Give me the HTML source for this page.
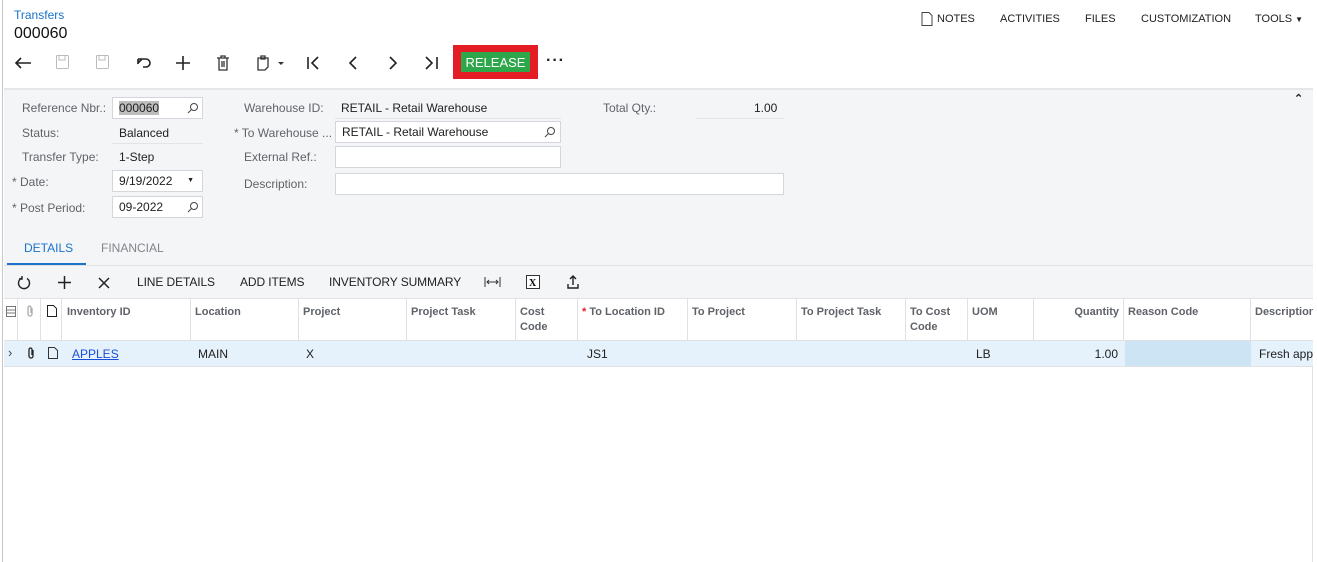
<!DOCTYPE html><html><head><style>
*{box-sizing:border-box;margin:0;padding:0}
body{width:1317px;height:562px;overflow:hidden;background:#fff;font-family:"Liberation Sans",sans-serif;font-size:12px;color:#212121;position:relative}
.a{position:absolute;white-space:nowrap}
.lbl{color:#5f6368;font-size:12px}
.inp{position:absolute;background:#fff;border:1px solid #d3d6da;height:22px;padding:3px 6px;font-size:12px}
.ico{position:absolute}
.th{position:absolute;top:299px;height:42px;border-right:1px solid #dfe1e4;padding:6px 4px;font-weight:bold;color:#5f6368;font-size:11px;line-height:15px;white-space:nowrap}
.td{position:absolute;top:341px;height:25px;padding:6px 6px;font-size:12px;white-space:nowrap}
.tb{position:absolute;top:13px;font-size:11px;color:#212121}
</style></head><body>
<div class="a" style="left:2px;top:0;width:1px;height:562px;background:#c8c8c8"></div>
<div class="a" style="left:1312px;top:89px;width:1px;height:473px;background:#dfe1e4"></div>
<div class="a" style="left:14px;top:8px;color:#1a73c9;font-size:12px">Transfers</div>
<div class="a" style="left:14px;top:25px;font-size:16px;color:#111">000060</div>
<svg class="ico" style="left:921px;top:12px" width="12" height="14"><path d="M1 .5h7l3 3v10H1z" fill="none" stroke="#444"/></svg>
<div class="tb" style="left:937px">NOTES</div>
<div class="tb" style="left:1000px">ACTIVITIES</div>
<div class="tb" style="left:1085px">FILES</div>
<div class="tb" style="left:1141px">CUSTOMIZATION</div>
<div class="tb" style="left:1255px">TOOLS <span style="font-size:8px">▼</span></div>
<svg class="ico" style="left:14px;top:54px" width="20" height="18" stroke="#222" fill="none" stroke-width="1.6"><path d="M3 9h14M7 4L2 9l5 5"/></svg>
<svg class="ico" style="left:55px;top:54px" width="16" height="17" stroke="#bbb" fill="none"><rect x="1.5" y="1.5" width="12" height="13" rx="1"/><path d="M4 2v4h6V2"/></svg>
<svg class="ico" style="left:95px;top:54px" width="16" height="17" stroke="#bbb" fill="none"><rect x="1.5" y="1.5" width="12" height="13" rx="1"/><path d="M4 2v4h6V2"/></svg>
<svg class="ico" style="left:135px;top:54px" width="18" height="17" stroke="#222" fill="none" stroke-width="1.6"><path d="M3 5h8a4 4 0 0 1 0 8H8M3 5v5M3 9l4-4" /></svg>
<svg class="ico" style="left:174px;top:54px" width="18" height="18" stroke="#222" stroke-width="1.6"><path d="M9 2v14M2 9h14"/></svg>
<svg class="ico" style="left:216px;top:54px" width="14" height="18" stroke="#333" fill="none" stroke-width="1.3"><path d="M1 4h12M5 4V2h4v2M3 4v12h8V4M6 7v6M8 7v6"/></svg>
<svg class="ico" style="left:255px;top:54px" width="30" height="18" stroke="#333" fill="none" stroke-width="1.3"><path d="M3 4h10v9l-3 3H3z M6 2h4v3H6z"/><path d="M23 8h6l-3 3z" fill="#333" stroke="none"/></svg>
<svg class="ico" style="left:306px;top:55px" width="14" height="16" stroke="#222" fill="none" stroke-width="1.6"><path d="M2 2v12M12 2l-6 6 6 6"/></svg>
<svg class="ico" style="left:346px;top:55px" width="14" height="16" stroke="#222" fill="none" stroke-width="1.6"><path d="M10 2l-6 6 6 6"/></svg>
<svg class="ico" style="left:386px;top:55px" width="14" height="16" stroke="#222" fill="none" stroke-width="1.6"><path d="M4 2l6 6-6 6"/></svg>
<svg class="ico" style="left:424px;top:55px" width="16" height="16" stroke="#222" fill="none" stroke-width="1.6"><path d="M2 2l6 6-6 6M13 2v12"/></svg>
<div class="a" style="left:453px;top:45px;width:85px;height:34px;background:#e41c23"></div>
<div class="a" style="left:461px;top:52px;width:69px;height:20px;background:#2ea64a;color:#fff;font-size:13px;text-align:center;line-height:21px">RELEASE</div>
<div class="a" style="left:546px;top:52px;font-size:16px;font-weight:bold;letter-spacing:1px">···</div>
<div class="a" style="left:4px;top:88px;width:1309px;height:211px;background:#f4f5f7;border-top:2px solid #e6e7e9"></div>
<div class="a" style="left:1294px;top:92px;font-size:11px;font-weight:bold">⌃</div>
<div class="a lbl" style="left:22px;top:101px">Reference Nbr.:</div>
<div class="inp" style="left:112px;top:97px;width:91px"><span style="background:#bdbdbd">000060</span></div>
<div class="a lbl" style="left:22px;top:126px">Status:</div>
<div class="a" style="left:119px;top:126px">Balanced</div>
<div class="a lbl" style="left:22px;top:150px">Transfer Type:</div>
<div class="a" style="left:119px;top:150px">1-Step</div>
<div class="a lbl" style="left:12px;top:175px">* Date:</div>
<div class="inp" style="left:112px;top:170px;width:91px">9/19/2022<span style="position:absolute;right:8px;font-size:7px;top:6px">▼</span></div>
<div class="a lbl" style="left:12px;top:201px">* Post Period:</div>
<div class="inp" style="left:112px;top:196px;width:91px">09-2022</div>
<div class="a lbl" style="left:244px;top:101px">Warehouse ID:</div>
<div class="a" style="left:341px;top:101px">RETAIL - Retail Warehouse</div>
<div class="a lbl" style="left:234px;top:126px">* To Warehouse ...</div>
<div class="inp" style="left:335px;top:121px;width:226px">RETAIL - Retail Warehouse</div>
<div class="a lbl" style="left:244px;top:150px">External Ref.:</div>
<div class="inp" style="left:335px;top:146px;width:226px"></div>
<div class="a lbl" style="left:244px;top:177px">Description:</div>
<div class="inp" style="left:335px;top:173px;width:449px"></div>
<div class="a lbl" style="left:603px;top:101px">Total Qty.:</div>
<div class="a" style="left:754px;top:101px">1.00</div>
<div class="a" style="left:696px;top:118px;width:88px;height:1px;background:#e3e4e6"></div>
<div class="a" style="left:112px;top:143px;width:91px;height:1px;background:#e3e4e6"></div>
<div class="a" style="left:335px;top:118px;width:226px;height:1px;background:#e3e4e6"></div>
<svg class="ico" style="left:187px;top:102px" width="12" height="12" stroke="#444" fill="none"><circle cx="7" cy="5" r="3.5"/><path d="M4.5 7.5L1 11"/></svg>
<svg class="ico" style="left:187px;top:201px" width="12" height="12" stroke="#444" fill="none"><circle cx="7" cy="5" r="3.5"/><path d="M4.5 7.5L1 11"/></svg>
<svg class="ico" style="left:544px;top:126px" width="12" height="12" stroke="#444" fill="none"><circle cx="7" cy="5" r="3.5"/><path d="M4.5 7.5L1 11"/></svg>
<div class="a" style="left:24px;top:241px;color:#1a73c9;font-size:12px">DETAILS</div>
<div class="a" style="left:101px;top:241px;color:#80868b;font-size:12px">FINANCIAL</div>
<div class="a" style="left:7px;top:263px;width:79px;height:2px;background:#1a73c9"></div>
<div class="a" style="left:4px;top:265px;width:1309px;height:1px;background:#dfe1e4"></div>
<svg class="ico" style="left:17px;top:275px" width="14" height="15" stroke="#222" fill="none" stroke-width="1.4"><path d="M5 3A5.5 5.5 0 1 0 10 3.5M5 1v3H2"/></svg>
<svg class="ico" style="left:57px;top:275px" width="15" height="15" stroke="#222" stroke-width="1.5"><path d="M7.5 1v13M1 7.5h13"/></svg>
<svg class="ico" style="left:98px;top:277px" width="12" height="12" stroke="#222" stroke-width="1.5"><path d="M1 1l10 10M11 1L1 11"/></svg>
<div class="a" style="left:137px;top:275px;font-size:12px;letter-spacing:-.1px">LINE DETAILS</div>
<div class="a" style="left:240px;top:275px;font-size:12px;letter-spacing:-.1px">ADD ITEMS</div>
<div class="a" style="left:329px;top:275px;font-size:12px;letter-spacing:-.1px">INVENTORY SUMMARY</div>
<svg class="ico" style="left:484px;top:275px" width="17" height="14" stroke="#333" fill="none"><path d="M1 2v10M16 2v10M3 7h11M5 5l-2 2 2 2M12 5l2 2-2 2"/></svg>
<svg class="ico" style="left:526px;top:275px" width="14" height="14"><rect x=".5" y=".5" width="13" height="13" fill="#fff" stroke="#333"/><text x="3" y="11" font-size="10" font-weight="bold" font-family="Liberation Serif">X</text></svg>
<svg class="ico" style="left:566px;top:274px" width="14" height="16" stroke="#222" fill="none" stroke-width="1.4"><path d="M7 2v9M4 5l3-3 3 3M2 10v4h10v-4"/></svg>
<div class="a" style="left:4px;top:298px;width:1309px;height:1px;background:#dfe1e4"></div>
<div class="a" style="left:4px;top:299px;width:1309px;height:42px;background:#fff"></div>
<div class="th" style="left:4px;width:14px"></div>
<div class="th" style="left:18px;width:23px"></div>
<div class="th" style="left:41px;width:21px"></div>
<div class="th" style="left:62px;width:129px;padding-left:5px">Inventory ID</div>
<div class="th" style="left:191px;width:108px">Location</div>
<div class="th" style="left:299px;width:108px">Project</div>
<div class="th" style="left:407px;width:109px">Project Task</div>
<div class="th" style="left:516px;width:62px">Cost<br>Code</div>
<div class="th" style="left:578px;width:110px"><span style="color:#e41c23">*</span> To Location ID</div>
<div class="th" style="left:688px;width:109px">To Project</div>
<div class="th" style="left:797px;width:109px">To Project Task</div>
<div class="th" style="left:906px;width:62px">To Cost<br>Code</div>
<div class="th" style="left:968px;width:66px">UOM</div>
<div class="th" style="left:1034px;width:90px;text-align:right">Quantity</div>
<div class="th" style="left:1124px;width:127px">Reason Code</div>
<div class="th" style="left:1251px;width:62px;border:none;overflow:hidden">Description</div>
<svg class="ico" style="left:6px;top:306px" width="10" height="11" stroke="#777" fill="none"><rect x=".5" y=".5" width="9" height="10"/><path d="M1 4h8M1 7h8"/></svg>
<svg class="ico" style="left:26px;top:305px" width="9" height="12" stroke="#aaa" fill="none" stroke-width="1.3"><path d="M6 3v6a2 2 0 0 1-4 0V2.5a1.5 1.5 0 0 1 3 0V8"/></svg>
<svg class="ico" style="left:47px;top:305px" width="10" height="12" stroke="#222" fill="none"><path d="M.5.5h6l3 3v8H.5z"/></svg>
<div class="a" style="left:4px;top:340px;width:1309px;height:1px;background:#dfe1e4"></div>
<div class="a" style="left:4px;top:341px;width:1309px;height:25px;background:#e5f1fb"></div>
<div class="a" style="left:1125px;top:341px;width:126px;height:25px;background:#cde4f4"></div>
<div class="a" style="left:4px;top:366px;width:1309px;height:1px;background:#dfe1e4"></div>
<div class="a" style="left:8px;top:345px;font-size:13px;color:#444">›</div>
<svg class="ico" style="left:27px;top:347px" width="9" height="12" stroke="#222" fill="none" stroke-width="1.3"><path d="M6 3v6a2 2 0 0 1-4 0V2.5a1.5 1.5 0 0 1 3 0V8"/></svg>
<svg class="ico" style="left:48px;top:347px" width="10" height="12" stroke="#333" fill="none"><path d="M.5.5h6l3 3v8H.5z"/></svg>
<div class="td" style="left:66px;color:#1a4fd8;text-decoration:underline">APPLES</div>
<div class="td" style="left:192px">MAIN</div>
<div class="td" style="left:300px">X</div>
<div class="td" style="left:581px">JS1</div>
<div class="td" style="left:970px">LB</div>
<div class="td" style="left:1034px;width:90px;text-align:right">1.00</div>
<div class="td" style="left:1253px;width:60px;overflow:hidden">Fresh apples</div>
</body></html>
